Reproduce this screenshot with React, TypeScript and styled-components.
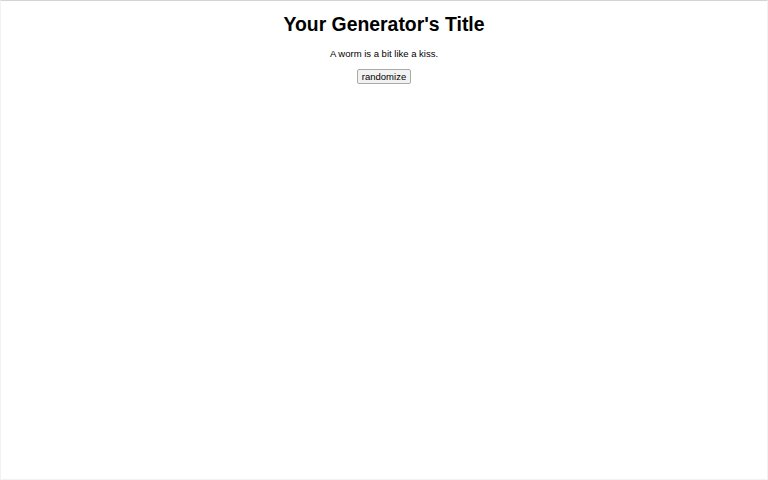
import styled, { createGlobalStyle } from "styled-components";

const Global = createGlobalStyle`
  html, body {
    margin: 0;
    padding: 0;
    background: #ffffff;
  }
  body {
    font-family: "Liberation Sans", Arial, sans-serif;
    color: #000;
  }
`;

const Frame = styled.div`
  box-sizing: border-box;
  height: 480px;
  border: 1px solid #f2f2f2;
  border-top: 1px solid #d4d4d4;
  text-align: center;
  padding-top: 12px;
`;

const Title = styled.h1`
  margin: 0;
  font-size: 19.4px;
  font-weight: bold;
  line-height: 23px;
`;

const Output = styled.p`
  margin: 12px 0 0;
  font-size: 9.5px;
  line-height: 11px;
`;

const RandomButton = styled.button`
  display: inline-block;
  margin-top: 10px;
  height: 15px;
  font-family: "Liberation Sans", Arial, sans-serif;
  font-size: 9.5px;
  line-height: 11px;
  padding: 0 4px;
  background: #f2f2f2;
  border: 1px solid #aaaaaa;
  border-radius: 2px;
  color: #000;
`;

export default function App() {
  return (
    <>
      <Global />
      <Frame>
        <Title>Your Generator's Title</Title>
        <Output>A worm is a bit like a kiss.</Output>
        <RandomButton>randomize</RandomButton>
      </Frame>
    </>
  );
}
